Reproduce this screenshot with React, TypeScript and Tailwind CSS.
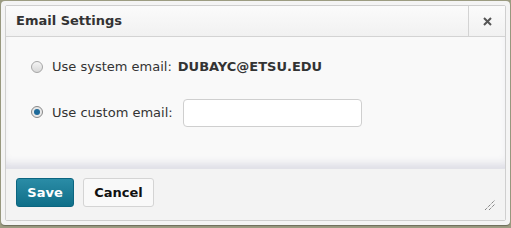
import React from "react";

export default function App() {
  const font = { fontFamily: '"DejaVu Sans", Verdana, sans-serif' };
  return (
    <div className="w-[511px] h-[228px] bg-[#9c9c82] p-px" style={font}>
      <div className="w-[509px] h-[224px] bg-[#f4f4f4] rounded-[4px] p-[4px] shadow-[0_1px_1px_rgba(0,0,0,0.3)]">
        <div className="h-[216px] border border-[#cfcfcf] rounded-[2px] flex flex-col bg-[#f9f9f9]">
          <div className="h-[31px] flex items-stretch border-b border-[#d3d3d3] bg-gradient-to-b from-[#fbfbfb] to-[#f1f1f1]">
            <div className="flex-1 flex items-center pl-[10px] text-[13px] font-bold text-[#333]">
              Email Settings
            </div>
            <div className="w-[37px] border-l border-[#d3d3d3] flex items-center justify-center">
              <svg width="9" height="9" viewBox="0 0 9 9">
                <path d="M1 1L8 8M8 1L1 8" stroke="#555" strokeWidth="2" />
              </svg>
            </div>
          </div>
          <div className="h-[131px] bg-[#f9f9f9] flex flex-col pl-[25px] pt-[17px] shadow-[inset_0_-8px_8px_-4px_rgba(200,200,215,0.6)]">
            <div className="flex items-center h-[25px]">
              <span className="w-[12px] h-[12px] rounded-full border border-[#a6a6a6] bg-gradient-to-b from-[#f4f4f4] to-[#d8d8d8]" />
              <span className="ml-[9px] text-[13px] text-[#333]">Use system email:</span>
              <span className="ml-[6px] text-[13px] font-bold text-[#333]">DUBAYC@ETSU.EDU</span>
            </div>
            <div className="flex items-start mt-[20px]">
              <span className="mt-[7px] w-[12px] h-[12px] rounded-full border border-[#888] bg-[#e8e8e8] flex items-center justify-center">
                <span className="w-[6px] h-[6px] rounded-full bg-[#1d6a9a]" />
              </span>
              <span className="ml-[9px] mt-[4px] text-[13px] text-[#333]">Use custom email:</span>
              <input className="ml-[10px] w-[179px] h-[28px] bg-white border border-[#cfcfcf] rounded-[4px] outline-none" />
            </div>
          </div>
          <div className="flex-1 bg-[#f3f3f3] border-t border-[#e2e2e8] flex items-center pl-[10px] pb-[4px] relative">
            <button className="w-[58px] h-[29px] rounded-[3px] bg-gradient-to-b from-[#2a8ca6] to-[#0e6f89] border border-[#0b6580] text-white text-[13px] font-bold">
              Save
            </button>
            <button className="ml-[9px] w-[71px] h-[29px] rounded-[3px] bg-[#f9f9f9] border border-[#d4d4d4] text-[#111] text-[13px] font-bold">
              Cancel
            </button>
            <svg className="absolute right-[9px] bottom-[9px]" width="12" height="12" viewBox="0 0 12 12">
              <path d="M1 11L11 1M5 11L11 5" stroke="#555" strokeWidth="1" strokeDasharray="1 1" />
            </svg>
          </div>
        </div>
      </div>
    </div>
  );
}
